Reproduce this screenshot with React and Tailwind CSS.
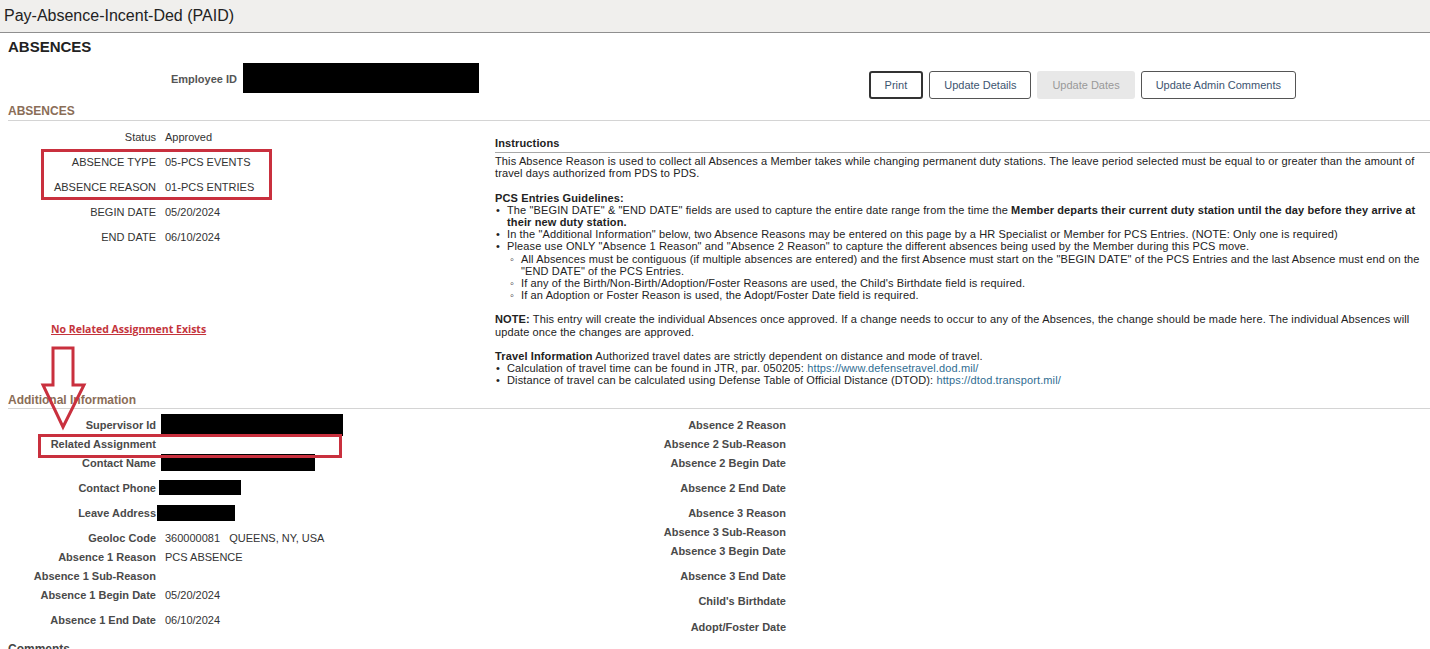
import React from 'react'

const topRows = [
  { label: 'Status', value: 'Approved' },
  { label: 'ABSENCE TYPE', value: '05-PCS EVENTS' },
  { label: 'ABSENCE REASON', value: '01-PCS ENTRIES' },
  { label: 'BEGIN DATE', value: '05/20/2024' },
  { label: 'END DATE', value: '06/10/2024' },
]

// row heights follow the spacing between label centres in the screenshot
const leftRows = [
  { label: 'Supervisor Id', h: 'h-[19px]', redact: 'ml-[5px] w-[182px] h-[22px]' },
  { label: 'Related Assignment', h: 'h-[19px]' },
  { label: 'Contact Name', h: 'h-[25px]', redact: 'ml-[5px] w-[154px] h-[17px]' },
  { label: 'Contact Phone', h: 'h-[25px]', redact: 'ml-[3px] w-[82px] h-[15px]' },
  { label: 'Leave Address', h: 'h-[25px]', redact: 'ml-[1px] w-[78px] h-[16px]' },
  { label: 'Geoloc Code', h: 'h-[19px]', value: '360000081\u00a0\u00a0\u00a0QUEENS, NY, USA' },
  { label: 'Absence 1 Reason', h: 'h-[19px]', value: 'PCS ABSENCE' },
  { label: 'Absence 1 Sub-Reason', h: 'h-[19px]' },
  { label: 'Absence 1 Begin Date', h: 'h-[25px]', value: '05/20/2024' },
  { label: 'Absence 1 End Date', h: 'h-[22px]', value: '06/10/2024' },
]

const rightRows = [
  { label: 'Absence 2 Reason', h: 'h-[19px]' },
  { label: 'Absence 2 Sub-Reason', h: 'h-[19px]' },
  { label: 'Absence 2 Begin Date', h: 'h-[25px]' },
  { label: 'Absence 2 End Date', h: 'h-[25px]' },
  { label: 'Absence 3 Reason', h: 'h-[19px]' },
  { label: 'Absence 3 Sub-Reason', h: 'h-[19px]' },
  { label: 'Absence 3 Begin Date', h: 'h-[25px]' },
  { label: 'Absence 3 End Date', h: 'h-[25px]' },
  { label: "Child's Birthdate", h: 'h-[26px]' },
  { label: 'Adopt/Foster Date', h: 'h-[16px]' },
]

const Bullet = ({ children, sub }) => (
  <div className={`flex ${sub ? 'pl-[15px]' : 'pl-[1px]'}`}>
    <span className="w-[11px] shrink-0">{sub ? '◦' : '•'}</span>
    <span>{children}</span>
  </div>
)

const App = () => {
  return (
    <div className="relative min-h-screen bg-white font-['Liberation_Sans',Arial,sans-serif] text-[#333]">
      {/* Page title bar */}
      <div className="h-[33px] bg-[#f0efed] border-b border-[#8f8f8f] flex items-center px-1 text-[16px] text-[#222]">
        Pay-Absence-Incent-Ded (PAID)
      </div>

      <div className="pl-2">
        <h1 className="pt-1 text-[15px] leading-[20px] font-bold text-[#222]">ABSENCES</h1>

        {/* Employee + actions */}
        <div className="flex items-start mt-[6px] pr-[134px]">
          <div className="flex items-center h-[30px]">
            <span className="w-[229px] pt-[3px] text-right text-[11px] font-bold text-[#555]">Employee ID</span>
            <div className="ml-[6px] w-[236px] h-[30px] bg-black" />
          </div>
          <div className="ml-auto mt-[8px] flex gap-[6px] text-[11px] text-[#3d5470]">
            <button className="h-[28px] px-[14px] border-2 border-[#333] rounded-[3px] bg-white">Print</button>
            <button className="h-[28px] px-[14px] border border-[#555] rounded-[3px] bg-white">Update Details</button>
            <button className="h-[28px] px-[15px] rounded-[3px] bg-[#e8e8e8] text-[#999]">Update Dates</button>
            <button className="h-[28px] px-[14px] border border-[#555] rounded-[3px] bg-white">Update Admin Comments</button>
          </div>
        </div>

        {/* ABSENCES section */}
        <div className="mt-[5px] pb-[2px] border-b border-[#d4d4d4] text-[12px] leading-[14px] font-bold text-[#8a6d57]">
          ABSENCES
        </div>

        <div className="flex">
          <div className="w-[487px] shrink-0 pt-[4px] text-[11px]">
            {topRows.map((r) => (
              <div key={r.label} className="flex items-center h-[25px]">
                <span className="w-[148px] text-right text-[#333]">{r.label}</span>
                <span className="ml-[9px] text-[#333]">{r.value}</span>
              </div>
            ))}
            <a href="#" className="block mt-[72px] ml-[43px] w-fit font-['Open_Sans',sans-serif] text-[10.5px] leading-[14px] font-bold text-[#c4343c] underline">
              No Related Assignment Exists
            </a>
          </div>

          <div className="flex-1 pt-[16px] pr-[6px] text-[11px] leading-[12.2px] tracking-[0.13px] text-[#222]">
            <div className="pb-[3px] -mr-[6px] border-b border-[#a8a8a8] font-bold">Instructions</div>
            <p className="mt-[2px]">
              This Absence Reason is used to collect all Absences a Member takes while changing permanent duty stations. The leave period selected must be equal to or greater than the amount of travel days authorized from PDS to PDS.
            </p>
            <div className="mt-[12px] font-bold">PCS Entries Guidelines:</div>
            <Bullet>
              The "BEGIN DATE" &amp; "END DATE" fields are used to capture the entire date range from the time the <b>Member departs their current duty station until the day before they arrive at their new duty station.</b>
            </Bullet>
            <Bullet>
              In the "Additional Information" below, two Absence Reasons may be entered on this page by a HR Specialist or Member for PCS Entries. (NOTE: Only one is required)
            </Bullet>
            <Bullet>
              Please use ONLY "Absence 1 Reason" and "Absence 2 Reason" to capture the different absences being used by the Member during this PCS move.
            </Bullet>
            <Bullet sub>
              All Absences must be contiguous (if multiple absences are entered) and the first Absence must start on the "BEGIN DATE" of the PCS Entries and the last Absence must end on the "END DATE" of the PCS Entries.
            </Bullet>
            <Bullet sub>
              If any of the Birth/Non-Birth/Adoption/Foster Reasons are used, the Child's Birthdate field is required.
            </Bullet>
            <Bullet sub>
              If an Adoption or Foster Reason is used, the Adopt/Foster Date field is required.
            </Bullet>
            <p className="mt-[12px]">
              <b>NOTE:</b> This entry will create the individual Absences once approved. If a change needs to occur to any of the Absences, the change should be made here. The individual Absences will update once the changes are approved.
            </p>
            <p className="mt-[12px]">
              <b>Travel Information</b> Authorized travel dates are strictly dependent on distance and mode of travel.
            </p>
            <Bullet>
              Calculation of travel time can be found in JTR, par. 050205: <a href="#" className="text-[#2f6d92]">https://www.defensetravel.dod.mil/</a>
            </Bullet>
            <Bullet>
              Distance of travel can be calculated using Defense Table of Official Distance (DTOD): <a href="#" className="text-[#2f6d92]">https://dtod.transport.mil/</a>
            </Bullet>
          </div>
        </div>

        {/* Additional Information */}
        <div className="mt-[7px] pb-[1px] border-b border-[#d4d4d4] text-[12px] leading-[14px] font-bold text-[#8a6d57]">
          Additional Information
        </div>

        <div className="flex pt-[9px] text-[11px]">
          <div className="w-[560px] shrink-0">
            {leftRows.map((r) => (
              <div key={r.label} className={r.h}>
                <div className="flex items-center h-[13px]">
                  <span className="w-[148px] shrink-0 text-right font-bold text-[#4a4a4a] whitespace-nowrap">{r.label}</span>
                  {r.redact && <div className={`${r.redact} shrink-0 bg-black`} />}
                  {r.value && <span className="ml-[9px] text-[#333]">{r.value}</span>}
                </div>
              </div>
            ))}
          </div>
          <div>
            {rightRows.map((r) => (
              <div key={r.label} className={r.h}>
                <div className="flex items-center h-[13px]">
                  <span className="w-[218px] text-right font-bold text-[#4a4a4a] whitespace-nowrap">{r.label}</span>
                </div>
              </div>
            ))}
          </div>
        </div>

        <div className="mt-[6px] text-[12px] leading-[14px] font-bold text-[#444]">Comments</div>
        <div className="h-[40px]" />
      </div>

      {/* Red annotation overlays */}
      <div className="absolute left-[41px] top-[149px] w-[231px] h-[51px] border-[3px] border-[#c9303e] pointer-events-none" />
      <div className="absolute left-[38px] top-[434px] w-[304px] h-[24px] border-[3px] border-[#c9303e] pointer-events-none" />
      <svg className="absolute left-[40px] top-[345px] pointer-events-none" width="48" height="86" viewBox="40 345 48 86">
        <polygon
          points="53,348 73,348 73,385 84,385 63,427 43,385 53,385"
          fill="none"
          stroke="#c9303e"
          strokeWidth="3"
          strokeLinejoin="miter"
        />
      </svg>
    </div>
  )
}

export default App
